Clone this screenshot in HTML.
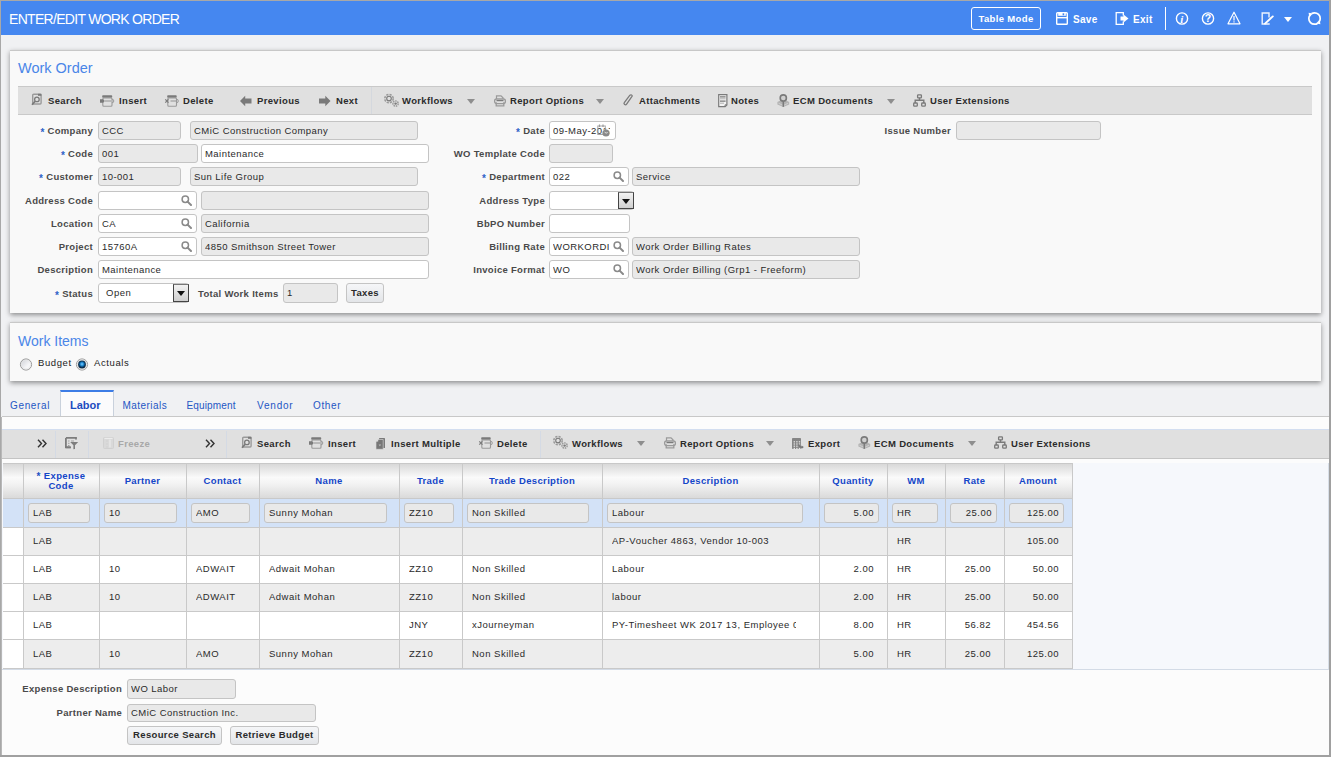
<!DOCTYPE html><html><head><meta charset="utf-8"><style>
html,body{margin:0;padding:0;} body{width:1331px;height:757px;overflow:hidden;position:relative;background:#f0f1f3;font-family:"Liberation Sans", sans-serif;}
*{box-sizing:content-box}
</style></head><body>
<div style="position:absolute;left:0px;top:0px;width:1331px;height:35px;background:#4587f0;"></div>
<div style="position:absolute;left:9px;top:2px;line-height:34px;font-size:14px;font-weight:normal;color:#fff;white-space:nowrap;letter-spacing:-0.7px;">ENTER/EDIT WORK ORDER</div>
<div style="position:absolute;left:971px;top:7px;width:70px;height:23px;box-sizing:border-box;border:1px solid #fff;border-radius:3px;color:#fff;font-size:9.5px;letter-spacing:0.35px;font-weight:bold;line-height:21px;text-align:center">Table Mode</div>
<svg style="position:absolute;left:1056px;top:12px" width="12" height="13" viewBox="0 0 12 13"><rect x="0.7" y="0.7" width="10.6" height="11.6" rx="0.8" fill="none" stroke="#fff" stroke-width="1.4"/><rect x="2.2" y="0.8" width="7.6" height="3" fill="#fff"/><rect x="6.6" y="1.3" width="1.6" height="2" fill="#4587f0"/><rect x="0.8" y="5" width="10.4" height="1.4" fill="#fff"/></svg>
<div style="position:absolute;left:1073px;top:3px;line-height:34px;font-size:10px;font-weight:bold;color:#fff;white-space:nowrap;letter-spacing:0.3px;">Save</div>
<svg style="position:absolute;left:1115px;top:12px" width="15" height="13" viewBox="0 0 15 13"><path d="M8.3 3.5V0.7H1.2v11.6h7.1V9.5" fill="none" stroke="#fff" stroke-width="1.3"/><path d="M5.5 4.5h3V2.5l5 4-5 4v-2h-3z" fill="#fff"/></svg>
<div style="position:absolute;left:1133px;top:3px;line-height:34px;font-size:10px;font-weight:bold;color:#fff;white-space:nowrap;letter-spacing:0.3px;">Exit</div>
<div style="position:absolute;left:1165px;top:7px;width:1px;height:23px;background:#fff;"></div>
<svg style="position:absolute;left:1175px;top:11px" width="14" height="14" viewBox="0 0 14 14"><circle cx="7" cy="7.5" r="5.6" fill="none" stroke="#fff" stroke-width="1.4"/><text x="6.8" y="11.6" font-family="Liberation Serif" font-style="italic" font-weight="bold" font-size="11" fill="#fff" text-anchor="middle">i</text></svg>
<svg style="position:absolute;left:1201px;top:11px" width="14" height="14" viewBox="0 0 14 14"><circle cx="7" cy="7.5" r="5.6" fill="none" stroke="#fff" stroke-width="1.4"/><text x="7" y="11.4" font-family="Liberation Sans" font-weight="bold" font-size="10.5" fill="#fff" text-anchor="middle">?</text></svg>
<svg style="position:absolute;left:1227px;top:11px" width="14" height="14" viewBox="0 0 14 14"><path d="M7 1.2L13 12.8H1z" fill="none" stroke="#fff" stroke-width="1.2" stroke-linejoin="round"/><rect x="6.4" y="5" width="1.2" height="4.5" fill="#fff"/><rect x="6.4" y="10.3" width="1.2" height="1.2" fill="#fff"/></svg>
<svg style="position:absolute;left:1260px;top:11px" width="15" height="15" viewBox="0 0 15 15"><path d="M9 6.5V2H2.2v11H9v-0.8" fill="none" stroke="#fff" stroke-width="1.4" opacity="0.9"/><path d="M5 12.6L12.8 5.4" stroke="#fff" stroke-width="1.9" stroke-linecap="round"/></svg>
<div style="position:absolute;left:1284px;top:17px;width:0;height:0;border-left:4px solid transparent;border-right:4px solid transparent;border-top:5px solid #fff"></div>
<svg style="position:absolute;left:1307px;top:11px" width="15" height="15" viewBox="0 0 15 15"><circle cx="7.5" cy="7.5" r="5.7" fill="none" stroke="#fff" stroke-width="1.7" stroke-dasharray="15.9 2" stroke-dashoffset="12.6"/><path d="M1.6 1.8L6 2.4 2.3 6.3z" fill="#fff"/><path d="M13.4 13.2L9 12.6 12.7 8.7z" fill="#fff"/></svg>
<div style="position:absolute;left:10px;top:50px;width:1311px;height:263px;background:#f9f9f9;border-top:1px solid #c8c8c8;box-sizing:border-box;box-shadow:0 2px 5px rgba(0,0,0,0.42);"></div>
<div style="position:absolute;left:18px;top:58px;line-height:20px;font-size:14.5px;font-weight:normal;color:#4a86e8;white-space:nowrap;">Work Order</div>
<div style="position:absolute;left:18px;top:86px;width:1294px;height:29px;background:#e0e0e0;border-top:1px solid #c9c9c9;border-bottom:1px solid #c9c9c9;box-sizing:border-box;"></div>
<svg style="position:absolute;left:31px;top:93px;overflow:visible" width="12" height="13" viewBox="0 0 12 13"><rect x="1.7" y="1.2" width="8.4" height="9.8" rx="1" fill="none" stroke="#9a9a9a" stroke-width="1.4"/><rect x="7" y="0.8" width="3.4" height="2" fill="#7a7a7a"/><circle cx="5.9" cy="6.4" r="2.3" fill="none" stroke="#7a7a7a" stroke-width="1.3"/><line x1="4.2" y1="8.2" x2="1" y2="11.8" stroke="#7a7a7a" stroke-width="1.7"/></svg>
<div style="position:absolute;left:48px;top:86px;line-height:29px;font-size:9.5px;font-weight:bold;color:#2b2b2b;white-space:nowrap;letter-spacing:0.35px;">Search</div>
<svg style="position:absolute;left:100px;top:95px;overflow:visible" width="14" height="12" viewBox="0 0 14 12"><rect x="2.2" y="0.2" width="10" height="2.6" rx="0.8" fill="#7a7a7a"/><rect x="2.8" y="3" width="9.2" height="8.2" rx="1" fill="none" stroke="#9a9a9a" stroke-width="1.1"/><line x1="5" y1="6" x2="11" y2="6" stroke="#9a9a9a" stroke-width="1.1"/><path d="M0 4.2h3.2l1.6 1.8-1.6 1.8H0z" fill="#7a7a7a"/><path d="M12 4.2a1.8 1.8 0 0 1 0 3.6" fill="none" stroke="#9a9a9a" stroke-width="1"/></svg>
<div style="position:absolute;left:119px;top:86px;line-height:29px;font-size:9.5px;font-weight:bold;color:#2b2b2b;white-space:nowrap;letter-spacing:0.35px;">Insert</div>
<svg style="position:absolute;left:165px;top:95px;overflow:visible" width="13" height="12" viewBox="0 0 13 12"><rect x="2.2" y="0.2" width="9.5" height="2.6" rx="0.8" fill="#7a7a7a"/><rect x="2.8" y="3" width="8.7" height="8.2" rx="1" fill="none" stroke="#9a9a9a" stroke-width="1.1"/><line x1="5.5" y1="6" x2="11" y2="6" stroke="#9a9a9a" stroke-width="1.1"/><path d="M0.3 4.3l3.2 3.4M3.5 4.3l-3.2 3.4" stroke="#7a7a7a" stroke-width="1.2"/><path d="M11.5 4.2a1.8 1.8 0 0 1 0 3.6" fill="none" stroke="#9a9a9a" stroke-width="1"/></svg>
<div style="position:absolute;left:183px;top:86px;line-height:29px;font-size:9.5px;font-weight:bold;color:#2b2b2b;white-space:nowrap;letter-spacing:0.35px;">Delete</div>
<svg style="position:absolute;left:240px;top:95px;overflow:visible" width="12" height="12" viewBox="0 0 12 12"><path d="M0 6L5.2 0.8V3.6H11.5V8.4H5.2V11.2z" fill="#7a7a7a"/></svg>
<div style="position:absolute;left:257px;top:86px;line-height:29px;font-size:9.5px;font-weight:bold;color:#2b2b2b;white-space:nowrap;letter-spacing:0.35px;">Previous</div>
<svg style="position:absolute;left:319px;top:95px;overflow:visible" width="12" height="12" viewBox="0 0 12 12"><path d="M11.5 6L6.3 0.8V3.6H0V8.4H6.3V11.2z" fill="#7a7a7a"/></svg>
<div style="position:absolute;left:336px;top:86px;line-height:29px;font-size:9.5px;font-weight:bold;color:#2b2b2b;white-space:nowrap;letter-spacing:0.35px;">Next</div>
<div style="position:absolute;left:371px;top:87px;width:1px;height:27px;background:#d4d8de;"></div>
<svg style="position:absolute;left:384px;top:93px;overflow:visible" width="15" height="14" viewBox="0 0 15 14"><circle cx="5" cy="5.6" r="4.2" fill="none" stroke="#9a9a9a" stroke-width="1.6" stroke-dasharray="2.2 1.1"/><circle cx="5" cy="5.6" r="2.3" fill="none" stroke="#7a7a7a" stroke-width="1.1"/><circle cx="11.6" cy="10.6" r="2.6" fill="none" stroke="#9a9a9a" stroke-width="1.5" stroke-dasharray="1.5 0.8"/><circle cx="11.6" cy="10.6" r="1.2" fill="#7a7a7a"/></svg>
<div style="position:absolute;left:402px;top:86px;line-height:29px;font-size:9.5px;font-weight:bold;color:#2b2b2b;white-space:nowrap;letter-spacing:0.35px;">Workflows</div>
<div style="position:absolute;left:467px;top:99px;width:0;height:0;border-left:4px solid transparent;border-right:4px solid transparent;border-top:5px solid #8e8e8e"></div>
<svg style="position:absolute;left:494px;top:95px;overflow:visible" width="12" height="12" viewBox="0 0 12 12"><path d="M2.5 4V0.8h4.5l2 2V4" fill="none" stroke="#9a9a9a" stroke-width="1.2"/><rect x="0.6" y="4" width="10.8" height="4.6" rx="2" fill="none" stroke="#9a9a9a" stroke-width="1.3"/><line x1="2.5" y1="5.6" x2="9.5" y2="5.6" stroke="#7a7a7a" stroke-width="1.2"/><path d="M2.2 7.2v3.6h7.6V7.2" fill="none" stroke="#9a9a9a" stroke-width="1.3"/></svg>
<div style="position:absolute;left:510px;top:86px;line-height:29px;font-size:9.5px;font-weight:bold;color:#2b2b2b;white-space:nowrap;letter-spacing:0.35px;">Report Options</div>
<div style="position:absolute;left:596px;top:99px;width:0;height:0;border-left:4px solid transparent;border-right:4px solid transparent;border-top:5px solid #8e8e8e"></div>
<svg style="position:absolute;left:623px;top:94px;overflow:visible" width="11" height="12" viewBox="0 0 11 12"><path d="M8.8 2.6L3.6 10.2a1.4 1.4 0 0 1-2.3-1.6L6.9 1.2a1.4 1.4 0 0 1 2.3 1.4" fill="none" stroke="#7a7a7a" stroke-width="1.3"/></svg>
<div style="position:absolute;left:639px;top:86px;line-height:29px;font-size:9.5px;font-weight:bold;color:#2b2b2b;white-space:nowrap;letter-spacing:0.35px;">Attachments</div>
<svg style="position:absolute;left:718px;top:94px;overflow:visible" width="10" height="13" viewBox="0 0 10 13"><path d="M0.7 0.7h8.2v10.2l-1.8 1.8H0.7z" fill="#f2f2f2" stroke="#7a7a7a" stroke-width="1.2"/><path d="M2 2.8h5.6M2 7.2h5.6" stroke="#7a7a7a" stroke-width="1.2"/><path d="M2 4.8h5.6M2 9.2h4" stroke="#a8a8a8" stroke-width="0.9"/><path d="M7 12.5V10.8h1.8" fill="none" stroke="#7a7a7a" stroke-width="0.9"/></svg>
<div style="position:absolute;left:731px;top:86px;line-height:29px;font-size:9.5px;font-weight:bold;color:#2b2b2b;white-space:nowrap;letter-spacing:0.35px;">Notes</div>
<svg style="position:absolute;left:777px;top:94px;overflow:visible" width="13" height="13" viewBox="0 0 13 13"><path d="M0.4 8L3.8 6.3 6.3 7.8 8.8 6.3 12.2 8V10.5L6.3 13 0.4 10.5z" fill="#b3b3b3"/><path d="M1.5 9.2L6.3 11.5 11.1 9.2" fill="none" stroke="#d8d8d8" stroke-width="0.7"/><circle cx="6.3" cy="4" r="3.1" fill="#d0d0d0" stroke="#7a7a7a" stroke-width="1.6"/><line x1="6.3" y1="7" x2="6.3" y2="12.8" stroke="#7a7a7a" stroke-width="1.5"/></svg>
<div style="position:absolute;left:793px;top:86px;line-height:29px;font-size:9.5px;font-weight:bold;color:#2b2b2b;white-space:nowrap;letter-spacing:0.35px;">ECM Documents</div>
<div style="position:absolute;left:887px;top:99px;width:0;height:0;border-left:4px solid transparent;border-right:4px solid transparent;border-top:5px solid #8e8e8e"></div>
<svg style="position:absolute;left:913px;top:94px;overflow:visible" width="13" height="13" viewBox="0 0 13 13"><rect x="4.6" y="0.8" width="3.8" height="3" rx="0.6" fill="none" stroke="#7a7a7a" stroke-width="1.3"/><path d="M6.5 3.8V6.2M2.2 9V6.2h8.6V9" fill="none" stroke="#7a7a7a" stroke-width="1.4"/><rect x="0.7" y="9" width="3.6" height="3.2" rx="0.8" fill="none" stroke="#7a7a7a" stroke-width="1.3"/><rect x="8.7" y="9" width="3.6" height="3.2" rx="0.8" fill="none" stroke="#7a7a7a" stroke-width="1.3"/></svg>
<div style="position:absolute;left:930px;top:86px;line-height:29px;font-size:9.5px;font-weight:bold;color:#2b2b2b;white-space:nowrap;letter-spacing:0.35px;">User Extensions</div>
<div style="position:absolute;left:-207px;top:121px;width:300px;line-height:19px;text-align:right;font-size:9.5px;font-weight:bold;color:#4a4a4a;white-space:nowrap;letter-spacing:0.3px;"><span style="color:#2f63c8;font-size:10px;position:relative;top:1.5px">*</span> Company</div>
<div style="position:absolute;left:-207px;top:144px;width:300px;line-height:19px;text-align:right;font-size:9.5px;font-weight:bold;color:#4a4a4a;white-space:nowrap;letter-spacing:0.3px;"><span style="color:#2f63c8;font-size:10px;position:relative;top:1.5px">*</span> Code</div>
<div style="position:absolute;left:-207px;top:167px;width:300px;line-height:19px;text-align:right;font-size:9.5px;font-weight:bold;color:#4a4a4a;white-space:nowrap;letter-spacing:0.3px;"><span style="color:#2f63c8;font-size:10px;position:relative;top:1.5px">*</span> Customer</div>
<div style="position:absolute;left:-207px;top:191px;width:300px;line-height:19px;text-align:right;font-size:9.5px;font-weight:bold;color:#4a4a4a;white-space:nowrap;letter-spacing:0.3px;">Address Code</div>
<div style="position:absolute;left:-207px;top:214px;width:300px;line-height:19px;text-align:right;font-size:9.5px;font-weight:bold;color:#4a4a4a;white-space:nowrap;letter-spacing:0.3px;">Location</div>
<div style="position:absolute;left:-207px;top:237px;width:300px;line-height:19px;text-align:right;font-size:9.5px;font-weight:bold;color:#4a4a4a;white-space:nowrap;letter-spacing:0.3px;">Project</div>
<div style="position:absolute;left:-207px;top:260px;width:300px;line-height:19px;text-align:right;font-size:9.5px;font-weight:bold;color:#4a4a4a;white-space:nowrap;letter-spacing:0.3px;">Description</div>
<div style="position:absolute;left:-207px;top:284px;width:300px;line-height:19px;text-align:right;font-size:9.5px;font-weight:bold;color:#4a4a4a;white-space:nowrap;letter-spacing:0.3px;"><span style="color:#2f63c8;font-size:10px;position:relative;top:1.5px">*</span> Status</div>
<div style="position:absolute;left:98px;top:121px;width:83px;height:19px;box-sizing:border-box;border:1px solid #c4c4c4;border-radius:3px;background:#e9e9e9;"><div style="position:absolute;left:3px;top:0;line-height:17px;font-size:9.5px;color:#2a2a2a;white-space:nowrap;overflow:hidden;letter-spacing:0.45px;width:73px">CCC</div></div>
<div style="position:absolute;left:190px;top:121px;width:228px;height:19px;box-sizing:border-box;border:1px solid #c4c4c4;border-radius:3px;background:#e9e9e9;"><div style="position:absolute;left:3px;top:0;line-height:17px;font-size:9.5px;color:#2a2a2a;white-space:nowrap;overflow:hidden;letter-spacing:0.45px;width:218px">CMiC Construction Company</div></div>
<div style="position:absolute;left:98px;top:144px;width:100px;height:19px;box-sizing:border-box;border:1px solid #c4c4c4;border-radius:3px;background:#e9e9e9;"><div style="position:absolute;left:3px;top:0;line-height:17px;font-size:9.5px;color:#2a2a2a;white-space:nowrap;overflow:hidden;letter-spacing:0.45px;width:90px">001</div></div>
<div style="position:absolute;left:201px;top:144px;width:228px;height:19px;box-sizing:border-box;border:1px solid #c4c4c4;border-radius:3px;background:#fff;"><div style="position:absolute;left:3px;top:0;line-height:17px;font-size:9.5px;color:#2a2a2a;white-space:nowrap;overflow:hidden;letter-spacing:0.45px;width:218px">Maintenance</div></div>
<div style="position:absolute;left:98px;top:167px;width:83px;height:19px;box-sizing:border-box;border:1px solid #c4c4c4;border-radius:3px;background:#e9e9e9;"><div style="position:absolute;left:3px;top:0;line-height:17px;font-size:9.5px;color:#2a2a2a;white-space:nowrap;overflow:hidden;letter-spacing:0.45px;width:73px">10-001</div></div>
<div style="position:absolute;left:190px;top:167px;width:228px;height:19px;box-sizing:border-box;border:1px solid #c4c4c4;border-radius:3px;background:#e9e9e9;"><div style="position:absolute;left:3px;top:0;line-height:17px;font-size:9.5px;color:#2a2a2a;white-space:nowrap;overflow:hidden;letter-spacing:0.45px;width:218px">Sun Life Group</div></div>
<div style="position:absolute;left:98px;top:191px;width:99px;height:19px;box-sizing:border-box;border:1px solid #c4c4c4;border-radius:3px;background:#fff;"><svg style="position:absolute;right:4px;top:3px" width="11" height="11" viewBox="0 0 11 11"><circle cx="4.3" cy="4.3" r="3.2" fill="none" stroke="#8a8a8a" stroke-width="1.5"/><line x1="6.6" y1="6.6" x2="10" y2="10" stroke="#8a8a8a" stroke-width="2" stroke-linecap="round"/></svg></div>
<div style="position:absolute;left:201px;top:191px;width:228px;height:19px;box-sizing:border-box;border:1px solid #c4c4c4;border-radius:3px;background:#e9e9e9;"></div>
<div style="position:absolute;left:98px;top:214px;width:99px;height:19px;box-sizing:border-box;border:1px solid #c4c4c4;border-radius:3px;background:#fff;"><div style="position:absolute;left:3px;top:0;line-height:17px;font-size:9.5px;color:#2a2a2a;white-space:nowrap;overflow:hidden;letter-spacing:0.45px;width:75px">CA</div><svg style="position:absolute;right:4px;top:3px" width="11" height="11" viewBox="0 0 11 11"><circle cx="4.3" cy="4.3" r="3.2" fill="none" stroke="#8a8a8a" stroke-width="1.5"/><line x1="6.6" y1="6.6" x2="10" y2="10" stroke="#8a8a8a" stroke-width="2" stroke-linecap="round"/></svg></div>
<div style="position:absolute;left:201px;top:214px;width:228px;height:19px;box-sizing:border-box;border:1px solid #c4c4c4;border-radius:3px;background:#e9e9e9;"><div style="position:absolute;left:3px;top:0;line-height:17px;font-size:9.5px;color:#2a2a2a;white-space:nowrap;overflow:hidden;letter-spacing:0.45px;width:218px">California</div></div>
<div style="position:absolute;left:98px;top:237px;width:99px;height:19px;box-sizing:border-box;border:1px solid #c4c4c4;border-radius:3px;background:#fff;"><div style="position:absolute;left:3px;top:0;line-height:17px;font-size:9.5px;color:#2a2a2a;white-space:nowrap;overflow:hidden;letter-spacing:0.45px;width:75px">15760A</div><svg style="position:absolute;right:4px;top:3px" width="11" height="11" viewBox="0 0 11 11"><circle cx="4.3" cy="4.3" r="3.2" fill="none" stroke="#8a8a8a" stroke-width="1.5"/><line x1="6.6" y1="6.6" x2="10" y2="10" stroke="#8a8a8a" stroke-width="2" stroke-linecap="round"/></svg></div>
<div style="position:absolute;left:201px;top:237px;width:228px;height:19px;box-sizing:border-box;border:1px solid #c4c4c4;border-radius:3px;background:#e9e9e9;"><div style="position:absolute;left:3px;top:0;line-height:17px;font-size:9.5px;color:#2a2a2a;white-space:nowrap;overflow:hidden;letter-spacing:0.45px;width:218px">4850 Smithson Street Tower</div></div>
<div style="position:absolute;left:98px;top:260px;width:331px;height:19px;box-sizing:border-box;border:1px solid #c4c4c4;border-radius:3px;background:#fff;"><div style="position:absolute;left:3px;top:0;line-height:17px;font-size:9.5px;color:#2a2a2a;white-space:nowrap;overflow:hidden;letter-spacing:0.45px;width:321px">Maintenance</div></div>
<div style="position:absolute;left:98px;top:283px;width:91px;height:20px;box-sizing:border-box;border:1px solid #c4c4c4;border-radius:3px;background:#fff;"><div style="position:absolute;left:7px;top:0;line-height:17px;font-size:9.5px;letter-spacing:0.5px;color:#2a2a2a">Open</div><div style="position:absolute;right:-1px;top:0px;width:16px;height:18px;box-sizing:border-box;border:1px solid #444;border-top-color:#777;background:linear-gradient(#f2f2f2,#cfcfcf);"><div style="position:absolute;left:3px;top:6px;width:0;height:0;border-left:4px solid transparent;border-right:4px solid transparent;border-top:5px solid #111"></div></div></div>
<div style="position:absolute;left:198px;top:284px;line-height:19px;font-size:9.5px;font-weight:bold;color:#4a4a4a;white-space:nowrap;letter-spacing:0.3px;">Total Work Items</div>
<div style="position:absolute;left:283px;top:283px;width:55px;height:20px;box-sizing:border-box;border:1px solid #c4c4c4;border-radius:3px;background:#e9e9e9;"><div style="position:absolute;left:3px;top:0;line-height:18px;font-size:9.5px;color:#2a2a2a;white-space:nowrap;overflow:hidden;letter-spacing:0.45px;width:45px">1</div></div>
<div style="position:absolute;left:346px;top:283px;width:38px;height:20px;box-sizing:border-box;border:1px solid #c4c4c4;border-radius:3px;background:linear-gradient(#f5f6f8,#e3e5e8);line-height:17px;text-align:center;font-size:9.5px;letter-spacing:0.35px;font-weight:bold;color:#2a2a2a;white-space:nowrap">Taxes</div>
<div style="position:absolute;left:245px;top:121px;width:300px;line-height:19px;text-align:right;font-size:9.5px;font-weight:bold;color:#4a4a4a;white-space:nowrap;letter-spacing:0.3px;"><span style="color:#2f63c8;font-size:10px;position:relative;top:1.5px">*</span> Date</div>
<div style="position:absolute;left:245px;top:144px;width:300px;line-height:19px;text-align:right;font-size:9.5px;font-weight:bold;color:#4a4a4a;white-space:nowrap;letter-spacing:0.3px;">WO Template Code</div>
<div style="position:absolute;left:245px;top:167px;width:300px;line-height:19px;text-align:right;font-size:9.5px;font-weight:bold;color:#4a4a4a;white-space:nowrap;letter-spacing:0.3px;"><span style="color:#2f63c8;font-size:10px;position:relative;top:1.5px">*</span> Department</div>
<div style="position:absolute;left:245px;top:191px;width:300px;line-height:19px;text-align:right;font-size:9.5px;font-weight:bold;color:#4a4a4a;white-space:nowrap;letter-spacing:0.3px;">Address Type</div>
<div style="position:absolute;left:245px;top:214px;width:300px;line-height:19px;text-align:right;font-size:9.5px;font-weight:bold;color:#4a4a4a;white-space:nowrap;letter-spacing:0.3px;">BbPO Number</div>
<div style="position:absolute;left:245px;top:237px;width:300px;line-height:19px;text-align:right;font-size:9.5px;font-weight:bold;color:#4a4a4a;white-space:nowrap;letter-spacing:0.3px;">Billing Rate</div>
<div style="position:absolute;left:245px;top:260px;width:300px;line-height:19px;text-align:right;font-size:9.5px;font-weight:bold;color:#4a4a4a;white-space:nowrap;letter-spacing:0.3px;">Invoice Format</div>
<div style="position:absolute;left:549px;top:121px;width:67px;height:19px;box-sizing:border-box;border:1px solid #c4c4c4;border-radius:3px;background:#fff;"><div style="position:absolute;left:3px;top:0;line-height:17px;font-size:9.5px;color:#2a2a2a;white-space:nowrap;overflow:hidden;letter-spacing:0.45px;width:57px">09-May-2017</div></div>
<svg style="position:absolute;left:597px;top:124px;overflow:visible" width="14" height="14" viewBox="0 0 14 14"><rect x="0.8" y="2" width="7.5" height="8.5" fill="none" stroke="#a8a8a8" stroke-width="1"/><path d="M2.5 0.5v2.5M6 0.5v2.5" stroke="#999" stroke-width="1.2"/><circle cx="9" cy="9" r="3.6" fill="#8a8a8a"/><path d="M7.6 8.2l1.6 0.9 1.5-0.6" stroke="#e8e8e8" stroke-width="0.9" fill="none"/></svg>
<div style="position:absolute;left:549px;top:144px;width:64px;height:19px;box-sizing:border-box;border:1px solid #c4c4c4;border-radius:3px;background:#e9e9e9;"></div>
<div style="position:absolute;left:549px;top:167px;width:80px;height:19px;box-sizing:border-box;border:1px solid #c4c4c4;border-radius:3px;background:#fff;"><div style="position:absolute;left:3px;top:0;line-height:17px;font-size:9.5px;color:#2a2a2a;white-space:nowrap;overflow:hidden;letter-spacing:0.45px;width:56px">022</div><svg style="position:absolute;right:4px;top:3px" width="11" height="11" viewBox="0 0 11 11"><circle cx="4.3" cy="4.3" r="3.2" fill="none" stroke="#8a8a8a" stroke-width="1.5"/><line x1="6.6" y1="6.6" x2="10" y2="10" stroke="#8a8a8a" stroke-width="2" stroke-linecap="round"/></svg></div>
<div style="position:absolute;left:632px;top:167px;width:228px;height:19px;box-sizing:border-box;border:1px solid #c4c4c4;border-radius:3px;background:#e9e9e9;"><div style="position:absolute;left:3px;top:0;line-height:17px;font-size:9.5px;color:#2a2a2a;white-space:nowrap;overflow:hidden;letter-spacing:0.45px;width:218px">Service</div></div>
<div style="position:absolute;left:549px;top:191px;width:85px;height:19px;box-sizing:border-box;border:1px solid #c4c4c4;border-radius:3px;background:#fff;"><div style="position:absolute;right:-1px;top:0px;width:16px;height:17px;box-sizing:border-box;border:1px solid #444;border-top-color:#777;background:linear-gradient(#f2f2f2,#cfcfcf);"><div style="position:absolute;left:3px;top:6px;width:0;height:0;border-left:4px solid transparent;border-right:4px solid transparent;border-top:5px solid #111"></div></div></div>
<div style="position:absolute;left:549px;top:214px;width:81px;height:19px;box-sizing:border-box;border:1px solid #c4c4c4;border-radius:3px;background:#fff;"></div>
<div style="position:absolute;left:549px;top:237px;width:80px;height:19px;box-sizing:border-box;border:1px solid #c4c4c4;border-radius:3px;background:#fff;"><div style="position:absolute;left:3px;top:0;line-height:17px;font-size:9.5px;color:#2a2a2a;white-space:nowrap;overflow:hidden;letter-spacing:0.45px;width:56px">WORKORDI</div><svg style="position:absolute;right:4px;top:3px" width="11" height="11" viewBox="0 0 11 11"><circle cx="4.3" cy="4.3" r="3.2" fill="none" stroke="#8a8a8a" stroke-width="1.5"/><line x1="6.6" y1="6.6" x2="10" y2="10" stroke="#8a8a8a" stroke-width="2" stroke-linecap="round"/></svg></div>
<div style="position:absolute;left:632px;top:237px;width:228px;height:19px;box-sizing:border-box;border:1px solid #c4c4c4;border-radius:3px;background:#e9e9e9;"><div style="position:absolute;left:3px;top:0;line-height:17px;font-size:9.5px;color:#2a2a2a;white-space:nowrap;overflow:hidden;letter-spacing:0.45px;width:218px">Work Order Billing Rates</div></div>
<div style="position:absolute;left:549px;top:260px;width:80px;height:19px;box-sizing:border-box;border:1px solid #c4c4c4;border-radius:3px;background:#fff;"><div style="position:absolute;left:3px;top:0;line-height:17px;font-size:9.5px;color:#2a2a2a;white-space:nowrap;overflow:hidden;letter-spacing:0.45px;width:56px">WO</div><svg style="position:absolute;right:4px;top:3px" width="11" height="11" viewBox="0 0 11 11"><circle cx="4.3" cy="4.3" r="3.2" fill="none" stroke="#8a8a8a" stroke-width="1.5"/><line x1="6.6" y1="6.6" x2="10" y2="10" stroke="#8a8a8a" stroke-width="2" stroke-linecap="round"/></svg></div>
<div style="position:absolute;left:632px;top:260px;width:228px;height:19px;box-sizing:border-box;border:1px solid #c4c4c4;border-radius:3px;background:#e9e9e9;"><div style="position:absolute;left:3px;top:0;line-height:17px;font-size:9.5px;color:#2a2a2a;white-space:nowrap;overflow:hidden;letter-spacing:0.45px;width:218px">Work Order Billing (Grp1 - Freeform)</div></div>
<div style="position:absolute;left:651px;top:121px;width:300px;line-height:19px;text-align:right;font-size:9.5px;font-weight:bold;color:#4a4a4a;white-space:nowrap;letter-spacing:0.3px;">Issue Number</div>
<div style="position:absolute;left:956px;top:121px;width:145px;height:19px;box-sizing:border-box;border:1px solid #c4c4c4;border-radius:3px;background:#e9e9e9;"></div>
<div style="position:absolute;left:10px;top:322px;width:1311px;height:59px;background:#f9f9f9;border-top:1px solid #c8c8c8;box-sizing:border-box;box-shadow:0 2px 5px rgba(0,0,0,0.42);"></div>
<div style="position:absolute;left:18px;top:331px;line-height:20px;font-size:14px;font-weight:normal;color:#4a86e8;white-space:nowrap;">Work Items</div>
<svg style="position:absolute;left:20px;top:358px;overflow:visible" width="13" height="13" viewBox="0 0 13 13"><defs><linearGradient id="rg" x1="0" y1="0" x2="1" y2="1"><stop offset="0" stop-color="#c9ccd2"/><stop offset="0.6" stop-color="#f4f4f6"/><stop offset="1" stop-color="#ffffff"/></linearGradient><radialGradient id="rb" cx="0.5" cy="0.45" r="0.5"><stop offset="0" stop-color="#7fd0ff"/><stop offset="0.45" stop-color="#1c86d0"/><stop offset="0.75" stop-color="#0a3d66"/><stop offset="1" stop-color="#06223c"/></radialGradient></defs><circle cx="6" cy="6.5" r="5.6" fill="url(#rg)" stroke="#9a9a9a" stroke-width="1"/><circle cx="6" cy="6.5" r="4.5" fill="none" stroke="#e6e6e6" stroke-width="0.8"/></svg>
<div style="position:absolute;left:38px;top:354px;line-height:18px;font-size:9.5px;font-weight:normal;color:#222;white-space:nowrap;letter-spacing:0.6px;">Budget</div>
<svg style="position:absolute;left:76px;top:358px;overflow:visible" width="13" height="13" viewBox="0 0 13 13"><circle cx="6" cy="6.5" r="5.6" fill="#fff" stroke="#9a9a9a" stroke-width="1"/><circle cx="6" cy="6.5" r="4.7" fill="none" stroke="#d6d6d6" stroke-width="0.8"/><circle cx="6" cy="6.5" r="3.9" fill="url(#rb)"/></svg>
<div style="position:absolute;left:94px;top:354px;line-height:18px;font-size:9.5px;font-weight:normal;color:#222;white-space:nowrap;letter-spacing:0.6px;">Actuals</div>
<div style="position:absolute;left:60px;top:390px;width:54px;height:26px;background:#fbfbfc;border-top:2px solid #3d7de6;border-left:1px solid #c9d1dc;border-right:1px solid #c9d1dc;box-sizing:border-box;"></div>
<div style="position:absolute;left:2px;top:416px;width:1327px;height:1px;background:#c8c8c8;"></div>
<div style="position:absolute;left:10px;top:397px;line-height:18px;font-size:10px;font-weight:normal;color:#2456c4;white-space:nowrap;letter-spacing:0.65px;">General</div>
<div style="position:absolute;left:122.5px;top:397px;line-height:18px;font-size:10px;font-weight:normal;color:#2456c4;white-space:nowrap;letter-spacing:0.45px;">Materials</div>
<div style="position:absolute;left:186.5px;top:397px;line-height:18px;font-size:10px;font-weight:normal;color:#2456c4;white-space:nowrap;letter-spacing:0.15px;">Equipment</div>
<div style="position:absolute;left:257px;top:397px;line-height:18px;font-size:10px;font-weight:normal;color:#2456c4;white-space:nowrap;letter-spacing:0.8px;">Vendor</div>
<div style="position:absolute;left:313px;top:397px;line-height:18px;font-size:10px;font-weight:normal;color:#2456c4;white-space:nowrap;letter-spacing:0.65px;">Other</div>
<div style="position:absolute;left:70px;top:396px;line-height:18px;font-size:11px;font-weight:bold;color:#1c4cc0;white-space:nowrap;">Labor</div>
<div style="position:absolute;left:2px;top:417px;width:1327px;height:340px;background:#fcfcfc;"></div>
<div style="position:absolute;left:2px;top:429px;width:1327px;height:1px;background:#d3def0;"></div>
<div style="position:absolute;left:2px;top:430px;width:1327px;height:29px;background:#e0e0e0;border-bottom:1px solid #c4c4c4;box-sizing:border-box;"></div>
<svg style="position:absolute;left:37px;top:439px" width="10" height="9" viewBox="0 0 10 9"><path d="M1 0.8l3.5 3.7L1 8.2M5.5 0.8L9 4.5 5.5 8.2" fill="none" stroke="#333" stroke-width="1.4"/></svg>
<div style="position:absolute;left:55px;top:431px;width:1px;height:27px;background:#d4dae4;"></div>
<svg style="position:absolute;left:65px;top:437px;overflow:visible" width="14" height="13" viewBox="0 0 14 13"><path d="M0.9 0.9H11V2.6M0.9 0.9V10.3H6" fill="none" stroke="#7d7d7d" stroke-width="1.8"/><path d="M0.9 10.3H5.5" stroke="#7d7d7d" stroke-width="1.8"/><path d="M3 4h1.5M6 4h3M3 6.3h1.5M3 8.5h1.5" stroke="#9a9a9a" stroke-width="0.9"/><path d="M5.2 5H13.2L10 8.3V12L8.4 12.2V8.3z" fill="#7d7d7d"/></svg>
<div style="position:absolute;left:88px;top:431px;width:1px;height:27px;background:#d4dae4;"></div>
<svg style="position:absolute;left:103px;top:437px;overflow:visible" width="11" height="12" viewBox="0 0 11 12"><rect x="0.5" y="0.5" width="10" height="11" rx="1" fill="#d9d9d9" stroke="#d0d0d0"/><path d="M1.5 1.3h8" stroke="#f4f4f4" stroke-width="0.9"/><path d="M7 2.5v8" stroke="#f0f0f0" stroke-width="0.9"/><path d="M3 4h2M3 7h2M3 10h2" stroke="#cfcfcf" stroke-width="0.8"/></svg>
<div style="position:absolute;left:118px;top:429px;line-height:29px;font-size:9.5px;font-weight:bold;color:#a8a8a8;white-space:nowrap;letter-spacing:0.35px;">Freeze</div>
<svg style="position:absolute;left:205px;top:439px" width="10" height="9" viewBox="0 0 10 9"><path d="M1 0.8l3.5 3.7L1 8.2M5.5 0.8L9 4.5 5.5 8.2" fill="none" stroke="#333" stroke-width="1.4"/></svg>
<div style="position:absolute;left:226px;top:431px;width:1px;height:27px;background:#d4dae4;"></div>
<svg style="position:absolute;left:241px;top:436px;overflow:visible" width="12" height="13" viewBox="0 0 12 13"><rect x="1.7" y="1.2" width="8.4" height="9.8" rx="1" fill="none" stroke="#9a9a9a" stroke-width="1.4"/><rect x="7" y="0.8" width="3.4" height="2" fill="#7a7a7a"/><circle cx="5.9" cy="6.4" r="2.3" fill="none" stroke="#7a7a7a" stroke-width="1.3"/><line x1="4.2" y1="8.2" x2="1" y2="11.8" stroke="#7a7a7a" stroke-width="1.7"/></svg>
<div style="position:absolute;left:257px;top:429px;line-height:29px;font-size:9.5px;font-weight:bold;color:#2b2b2b;white-space:nowrap;letter-spacing:0.35px;">Search</div>
<svg style="position:absolute;left:309px;top:437px;overflow:visible" width="14" height="12" viewBox="0 0 14 12"><rect x="2.2" y="0.2" width="10" height="2.6" rx="0.8" fill="#7a7a7a"/><rect x="2.8" y="3" width="9.2" height="8.2" rx="1" fill="none" stroke="#9a9a9a" stroke-width="1.1"/><line x1="5" y1="6" x2="11" y2="6" stroke="#9a9a9a" stroke-width="1.1"/><path d="M0 4.2h3.2l1.6 1.8-1.6 1.8H0z" fill="#7a7a7a"/><path d="M12 4.2a1.8 1.8 0 0 1 0 3.6" fill="none" stroke="#9a9a9a" stroke-width="1"/></svg>
<div style="position:absolute;left:328px;top:429px;line-height:29px;font-size:9.5px;font-weight:bold;color:#2b2b2b;white-space:nowrap;letter-spacing:0.35px;">Insert</div>
<svg style="position:absolute;left:376px;top:438px;overflow:visible" width="10" height="13" viewBox="0 0 10 13"><rect x="3" y="0" width="6" height="10" rx="0.6" fill="#7a7a7a"/><path d="M2.2 1.5H7.2V11.3H0V3.8z" fill="#777" stroke="#dcdcdc" stroke-width="0.6"/><path d="M0.2 3.6L2.2 1.6V3.6z" fill="#e8e8e8"/><path d="M2.6 6.5h2.6L3.9 8.3z" fill="#bdbdbd"/></svg>
<div style="position:absolute;left:391px;top:429px;line-height:29px;font-size:9.5px;font-weight:bold;color:#2b2b2b;white-space:nowrap;letter-spacing:0.35px;">Insert Multiple</div>
<svg style="position:absolute;left:479px;top:437px;overflow:visible" width="13" height="12" viewBox="0 0 13 12"><rect x="2.2" y="0.2" width="9.5" height="2.6" rx="0.8" fill="#7a7a7a"/><rect x="2.8" y="3" width="8.7" height="8.2" rx="1" fill="none" stroke="#9a9a9a" stroke-width="1.1"/><line x1="5.5" y1="6" x2="11" y2="6" stroke="#9a9a9a" stroke-width="1.1"/><path d="M0.3 4.3l3.2 3.4M3.5 4.3l-3.2 3.4" stroke="#7a7a7a" stroke-width="1.2"/><path d="M11.5 4.2a1.8 1.8 0 0 1 0 3.6" fill="none" stroke="#9a9a9a" stroke-width="1"/></svg>
<div style="position:absolute;left:497px;top:429px;line-height:29px;font-size:9.5px;font-weight:bold;color:#2b2b2b;white-space:nowrap;letter-spacing:0.35px;">Delete</div>
<div style="position:absolute;left:540px;top:431px;width:1px;height:27px;background:#d4dae4;"></div>
<svg style="position:absolute;left:553px;top:435px;overflow:visible" width="15" height="14" viewBox="0 0 15 14"><circle cx="5" cy="5.6" r="4.2" fill="none" stroke="#9a9a9a" stroke-width="1.6" stroke-dasharray="2.2 1.1"/><circle cx="5" cy="5.6" r="2.3" fill="none" stroke="#7a7a7a" stroke-width="1.1"/><circle cx="11.6" cy="10.6" r="2.6" fill="none" stroke="#9a9a9a" stroke-width="1.5" stroke-dasharray="1.5 0.8"/><circle cx="11.6" cy="10.6" r="1.2" fill="#7a7a7a"/></svg>
<div style="position:absolute;left:572px;top:429px;line-height:29px;font-size:9.5px;font-weight:bold;color:#2b2b2b;white-space:nowrap;letter-spacing:0.35px;">Workflows</div>
<div style="position:absolute;left:637px;top:441px;width:0;height:0;border-left:4px solid transparent;border-right:4px solid transparent;border-top:5px solid #8e8e8e"></div>
<svg style="position:absolute;left:664px;top:437px;overflow:visible" width="12" height="12" viewBox="0 0 12 12"><path d="M2.5 4V0.8h4.5l2 2V4" fill="none" stroke="#9a9a9a" stroke-width="1.2"/><rect x="0.6" y="4" width="10.8" height="4.6" rx="2" fill="none" stroke="#9a9a9a" stroke-width="1.3"/><line x1="2.5" y1="5.6" x2="9.5" y2="5.6" stroke="#7a7a7a" stroke-width="1.2"/><path d="M2.2 7.2v3.6h7.6V7.2" fill="none" stroke="#9a9a9a" stroke-width="1.3"/></svg>
<div style="position:absolute;left:680px;top:429px;line-height:29px;font-size:9.5px;font-weight:bold;color:#2b2b2b;white-space:nowrap;letter-spacing:0.35px;">Report Options</div>
<div style="position:absolute;left:766px;top:441px;width:0;height:0;border-left:4px solid transparent;border-right:4px solid transparent;border-top:5px solid #8e8e8e"></div>
<svg style="position:absolute;left:792px;top:438px;overflow:visible" width="12" height="12" viewBox="0 0 12 12"><rect x="0" y="0" width="9" height="11" rx="0.8" fill="#858585"/><rect x="1.6" y="3.2" width="1.4" height="1.2" fill="#e6e6e6"/><rect x="4.2" y="3.2" width="1.4" height="1.2" fill="#e6e6e6"/><rect x="6.8" y="3.2" width="1.4" height="1.2" fill="#e6e6e6"/><rect x="1.6" y="5.4" width="1.4" height="1.2" fill="#e6e6e6"/><rect x="4.2" y="5.4" width="1.4" height="1.2" fill="#e6e6e6"/><rect x="6.8" y="5.4" width="1.4" height="1.2" fill="#e6e6e6"/><rect x="1.6" y="7.6" width="1.4" height="1.2" fill="#e6e6e6"/><rect x="4.2" y="7.6" width="1.4" height="1.2" fill="#e6e6e6"/><rect x="6.8" y="7.6" width="1.4" height="1.2" fill="#e6e6e6"/><rect x="1.6" y="9.8" width="1.4" height="1.2" fill="#e6e6e6"/><rect x="4.2" y="9.8" width="1.4" height="1.2" fill="#e6e6e6"/><rect x="6.8" y="9.8" width="1.4" height="1.2" fill="#e6e6e6"/><path d="M6.5 6.5Q7.5 9.5 10.5 9.2" fill="none" stroke="#777" stroke-width="1.3"/><path d="M9.5 7.4L11.8 9.1 9.6 10.9z" fill="#777"/></svg>
<div style="position:absolute;left:808px;top:429px;line-height:29px;font-size:9.5px;font-weight:bold;color:#2b2b2b;white-space:nowrap;letter-spacing:0.35px;">Export</div>
<svg style="position:absolute;left:858px;top:436px;overflow:visible" width="13" height="13" viewBox="0 0 13 13"><path d="M0.4 8L3.8 6.3 6.3 7.8 8.8 6.3 12.2 8V10.5L6.3 13 0.4 10.5z" fill="#b3b3b3"/><path d="M1.5 9.2L6.3 11.5 11.1 9.2" fill="none" stroke="#d8d8d8" stroke-width="0.7"/><circle cx="6.3" cy="4" r="3.1" fill="#d0d0d0" stroke="#7a7a7a" stroke-width="1.6"/><line x1="6.3" y1="7" x2="6.3" y2="12.8" stroke="#7a7a7a" stroke-width="1.5"/></svg>
<div style="position:absolute;left:874px;top:429px;line-height:29px;font-size:9.5px;font-weight:bold;color:#2b2b2b;white-space:nowrap;letter-spacing:0.35px;">ECM Documents</div>
<div style="position:absolute;left:968px;top:441px;width:0;height:0;border-left:4px solid transparent;border-right:4px solid transparent;border-top:5px solid #8e8e8e"></div>
<svg style="position:absolute;left:994px;top:436px;overflow:visible" width="13" height="13" viewBox="0 0 13 13"><rect x="4.6" y="0.8" width="3.8" height="3" rx="0.6" fill="none" stroke="#7a7a7a" stroke-width="1.3"/><path d="M6.5 3.8V6.2M2.2 9V6.2h8.6V9" fill="none" stroke="#7a7a7a" stroke-width="1.4"/><rect x="0.7" y="9" width="3.6" height="3.2" rx="0.8" fill="none" stroke="#7a7a7a" stroke-width="1.3"/><rect x="8.7" y="9" width="3.6" height="3.2" rx="0.8" fill="none" stroke="#7a7a7a" stroke-width="1.3"/></svg>
<div style="position:absolute;left:1011px;top:429px;line-height:29px;font-size:9.5px;font-weight:bold;color:#2b2b2b;white-space:nowrap;letter-spacing:0.35px;">User Extensions</div>
<div style="position:absolute;left:2px;top:463px;width:1327px;height:207px;background:#f6f8fc;border-right:1px solid #d8dfe8;border-bottom:1px solid #d3dbe6;box-sizing:border-box;"></div>
<div style="position:absolute;left:3px;top:463px;width:1070px;height:36px;background:linear-gradient(#d8d8d8 0%,#fafafa 40%,#f2f2f2 60%,#dadada 100%);border-top:1px solid #c8c8c8;border-bottom:1px solid #c9c9c9;box-sizing:border-box;"></div>
<div style="position:absolute;left:23px;top:463px;width:76px;height:35px;display:flex;align-items:center;justify-content:center;text-align:center;font-size:9.5px;letter-spacing:0.35px;font-weight:bold;color:#1446c8;line-height:10px"><div><span style="color:#1d52c4;font-size:10px;position:relative;top:1.5px">*</span> Expense<br>Code</div></div>
<div style="position:absolute;left:99px;top:463px;width:87px;height:35px;display:flex;align-items:center;justify-content:center;text-align:center;font-size:9.5px;letter-spacing:0.35px;font-weight:bold;color:#1446c8;line-height:10px">Partner</div>
<div style="position:absolute;left:186px;top:463px;width:73px;height:35px;display:flex;align-items:center;justify-content:center;text-align:center;font-size:9.5px;letter-spacing:0.35px;font-weight:bold;color:#1446c8;line-height:10px">Contact</div>
<div style="position:absolute;left:259px;top:463px;width:140px;height:35px;display:flex;align-items:center;justify-content:center;text-align:center;font-size:9.5px;letter-spacing:0.35px;font-weight:bold;color:#1446c8;line-height:10px">Name</div>
<div style="position:absolute;left:399px;top:463px;width:63px;height:35px;display:flex;align-items:center;justify-content:center;text-align:center;font-size:9.5px;letter-spacing:0.35px;font-weight:bold;color:#1446c8;line-height:10px">Trade</div>
<div style="position:absolute;left:462px;top:463px;width:140px;height:35px;display:flex;align-items:center;justify-content:center;text-align:center;font-size:9.5px;letter-spacing:0.35px;font-weight:bold;color:#1446c8;line-height:10px">Trade Description</div>
<div style="position:absolute;left:602px;top:463px;width:217px;height:35px;display:flex;align-items:center;justify-content:center;text-align:center;font-size:9.5px;letter-spacing:0.35px;font-weight:bold;color:#1446c8;line-height:10px">Description</div>
<div style="position:absolute;left:819px;top:463px;width:68px;height:35px;display:flex;align-items:center;justify-content:center;text-align:center;font-size:9.5px;letter-spacing:0.35px;font-weight:bold;color:#1446c8;line-height:10px">Quantity</div>
<div style="position:absolute;left:887px;top:463px;width:58px;height:35px;display:flex;align-items:center;justify-content:center;text-align:center;font-size:9.5px;letter-spacing:0.35px;font-weight:bold;color:#1446c8;line-height:10px">WM</div>
<div style="position:absolute;left:945px;top:463px;width:59px;height:35px;display:flex;align-items:center;justify-content:center;text-align:center;font-size:9.5px;letter-spacing:0.35px;font-weight:bold;color:#1446c8;line-height:10px">Rate</div>
<div style="position:absolute;left:1004px;top:463px;width:68px;height:35px;display:flex;align-items:center;justify-content:center;text-align:center;font-size:9.5px;letter-spacing:0.35px;font-weight:bold;color:#1446c8;line-height:10px">Amount</div>
<div style="position:absolute;left:3px;top:499px;width:1070px;height:29px;background:#d3e2f7;"></div>
<div style="position:absolute;left:3px;top:527px;width:1070px;height:1px;background:#c9c9c9;"></div>
<div style="position:absolute;left:28px;top:503px;width:62px;height:20px;box-sizing:border-box;border:1px solid #c4c4c4;border-radius:3px;background:#e9e9e9;"><div style="position:absolute;left:4px;top:0;line-height:18px;font-size:9.5px;color:#2a2a2a;white-space:nowrap;overflow:hidden;letter-spacing:0.5px;width:51px">LAB</div></div>
<div style="position:absolute;left:104px;top:503px;width:73px;height:20px;box-sizing:border-box;border:1px solid #c4c4c4;border-radius:3px;background:#e9e9e9;"><div style="position:absolute;left:4px;top:0;line-height:18px;font-size:9.5px;color:#2a2a2a;white-space:nowrap;overflow:hidden;letter-spacing:0.5px;width:62px">10</div></div>
<div style="position:absolute;left:191px;top:503px;width:59px;height:20px;box-sizing:border-box;border:1px solid #c4c4c4;border-radius:3px;background:#e9e9e9;"><div style="position:absolute;left:4px;top:0;line-height:18px;font-size:9.5px;color:#2a2a2a;white-space:nowrap;overflow:hidden;letter-spacing:0.5px;width:48px">AMO</div></div>
<div style="position:absolute;left:264px;top:503px;width:123px;height:20px;box-sizing:border-box;border:1px solid #c4c4c4;border-radius:3px;background:#e9e9e9;"><div style="position:absolute;left:4px;top:0;line-height:18px;font-size:9.5px;color:#2a2a2a;white-space:nowrap;overflow:hidden;letter-spacing:0.5px;width:112px">Sunny Mohan</div></div>
<div style="position:absolute;left:404px;top:503px;width:50px;height:20px;box-sizing:border-box;border:1px solid #c4c4c4;border-radius:3px;background:#e9e9e9;"><div style="position:absolute;left:4px;top:0;line-height:18px;font-size:9.5px;color:#2a2a2a;white-space:nowrap;overflow:hidden;letter-spacing:0.5px;width:39px">ZZ10</div></div>
<div style="position:absolute;left:467px;top:503px;width:122px;height:20px;box-sizing:border-box;border:1px solid #c4c4c4;border-radius:3px;background:#e9e9e9;"><div style="position:absolute;left:4px;top:0;line-height:18px;font-size:9.5px;color:#2a2a2a;white-space:nowrap;overflow:hidden;letter-spacing:0.5px;width:111px">Non Skilled</div></div>
<div style="position:absolute;left:607px;top:503px;width:196px;height:20px;box-sizing:border-box;border:1px solid #c4c4c4;border-radius:3px;background:#e9e9e9;"><div style="position:absolute;left:4px;top:0;line-height:18px;font-size:9.5px;color:#2a2a2a;white-space:nowrap;overflow:hidden;letter-spacing:0.5px;width:185px">Labour</div></div>
<div style="position:absolute;left:824px;top:503px;width:55px;height:20px;box-sizing:border-box;border:1px solid #c4c4c4;border-radius:3px;background:#e9e9e9;"><div style="position:absolute;right:4px;top:0;line-height:18px;font-size:9.5px;color:#2a2a2a;white-space:nowrap;letter-spacing:0.5px">5.00</div></div>
<div style="position:absolute;left:892px;top:503px;width:46px;height:20px;box-sizing:border-box;border:1px solid #c4c4c4;border-radius:3px;background:#e9e9e9;"><div style="position:absolute;left:4px;top:0;line-height:18px;font-size:9.5px;color:#2a2a2a;white-space:nowrap;overflow:hidden;letter-spacing:0.5px;width:35px">HR</div></div>
<div style="position:absolute;left:950px;top:503px;width:47px;height:20px;box-sizing:border-box;border:1px solid #c4c4c4;border-radius:3px;background:#e9e9e9;"><div style="position:absolute;right:4px;top:0;line-height:18px;font-size:9.5px;color:#2a2a2a;white-space:nowrap;letter-spacing:0.5px">25.00</div></div>
<div style="position:absolute;left:1009px;top:503px;width:55px;height:20px;box-sizing:border-box;border:1px solid #c4c4c4;border-radius:3px;background:#e9e9e9;"><div style="position:absolute;right:4px;top:0;line-height:18px;font-size:9.5px;color:#2a2a2a;white-space:nowrap;letter-spacing:0.5px">125.00</div></div>
<div style="position:absolute;left:3px;top:528px;width:1070px;height:28px;background:#ededed;"></div>
<div style="position:absolute;left:3px;top:528px;width:20px;height:28px;background:#fff;"></div>
<div style="position:absolute;left:3px;top:555px;width:1070px;height:1px;background:#c9c9c9;"></div>
<div style="position:absolute;left:33px;top:528px;width:43px;overflow:hidden;line-height:26px;font-size:9.5px;color:#2a2a2a;white-space:nowrap;letter-spacing:0.5px">LAB</div>
<div style="position:absolute;left:612px;top:528px;width:184px;overflow:hidden;line-height:26px;font-size:9.5px;color:#2a2a2a;white-space:nowrap;letter-spacing:0.5px">AP-Voucher 4863, Vendor 10-003</div>
<div style="position:absolute;left:897px;top:528px;width:25px;overflow:hidden;line-height:26px;font-size:9.5px;color:#2a2a2a;white-space:nowrap;letter-spacing:0.5px">HR</div>
<div style="position:absolute;left:1004px;top:528px;width:55px;line-height:26px;text-align:right;font-size:9.5px;color:#2a2a2a;white-space:nowrap;letter-spacing:0.5px">105.00</div>
<div style="position:absolute;left:3px;top:556px;width:1070px;height:28px;background:#ffffff;"></div>
<div style="position:absolute;left:3px;top:556px;width:20px;height:28px;background:#fff;"></div>
<div style="position:absolute;left:3px;top:583px;width:1070px;height:1px;background:#c9c9c9;"></div>
<div style="position:absolute;left:33px;top:556px;width:43px;overflow:hidden;line-height:26px;font-size:9.5px;color:#2a2a2a;white-space:nowrap;letter-spacing:0.5px">LAB</div>
<div style="position:absolute;left:109px;top:556px;width:54px;overflow:hidden;line-height:26px;font-size:9.5px;color:#2a2a2a;white-space:nowrap;letter-spacing:0.5px">10</div>
<div style="position:absolute;left:196px;top:556px;width:40px;overflow:hidden;line-height:26px;font-size:9.5px;color:#2a2a2a;white-space:nowrap;letter-spacing:0.5px">ADWAIT</div>
<div style="position:absolute;left:269px;top:556px;width:107px;overflow:hidden;line-height:26px;font-size:9.5px;color:#2a2a2a;white-space:nowrap;letter-spacing:0.5px">Adwait Mohan</div>
<div style="position:absolute;left:409px;top:556px;width:30px;overflow:hidden;line-height:26px;font-size:9.5px;color:#2a2a2a;white-space:nowrap;letter-spacing:0.5px">ZZ10</div>
<div style="position:absolute;left:472px;top:556px;width:107px;overflow:hidden;line-height:26px;font-size:9.5px;color:#2a2a2a;white-space:nowrap;letter-spacing:0.5px">Non Skilled</div>
<div style="position:absolute;left:612px;top:556px;width:184px;overflow:hidden;line-height:26px;font-size:9.5px;color:#2a2a2a;white-space:nowrap;letter-spacing:0.5px">Labour</div>
<div style="position:absolute;left:819px;top:556px;width:55px;line-height:26px;text-align:right;font-size:9.5px;color:#2a2a2a;white-space:nowrap;letter-spacing:0.5px">2.00</div>
<div style="position:absolute;left:897px;top:556px;width:25px;overflow:hidden;line-height:26px;font-size:9.5px;color:#2a2a2a;white-space:nowrap;letter-spacing:0.5px">HR</div>
<div style="position:absolute;left:945px;top:556px;width:46px;line-height:26px;text-align:right;font-size:9.5px;color:#2a2a2a;white-space:nowrap;letter-spacing:0.5px">25.00</div>
<div style="position:absolute;left:1004px;top:556px;width:55px;line-height:26px;text-align:right;font-size:9.5px;color:#2a2a2a;white-space:nowrap;letter-spacing:0.5px">50.00</div>
<div style="position:absolute;left:3px;top:584px;width:1070px;height:28px;background:#ededed;"></div>
<div style="position:absolute;left:3px;top:584px;width:20px;height:28px;background:#fff;"></div>
<div style="position:absolute;left:3px;top:611px;width:1070px;height:1px;background:#c9c9c9;"></div>
<div style="position:absolute;left:33px;top:584px;width:43px;overflow:hidden;line-height:26px;font-size:9.5px;color:#2a2a2a;white-space:nowrap;letter-spacing:0.5px">LAB</div>
<div style="position:absolute;left:109px;top:584px;width:54px;overflow:hidden;line-height:26px;font-size:9.5px;color:#2a2a2a;white-space:nowrap;letter-spacing:0.5px">10</div>
<div style="position:absolute;left:196px;top:584px;width:40px;overflow:hidden;line-height:26px;font-size:9.5px;color:#2a2a2a;white-space:nowrap;letter-spacing:0.5px">ADWAIT</div>
<div style="position:absolute;left:269px;top:584px;width:107px;overflow:hidden;line-height:26px;font-size:9.5px;color:#2a2a2a;white-space:nowrap;letter-spacing:0.5px">Adwait Mohan</div>
<div style="position:absolute;left:409px;top:584px;width:30px;overflow:hidden;line-height:26px;font-size:9.5px;color:#2a2a2a;white-space:nowrap;letter-spacing:0.5px">ZZ10</div>
<div style="position:absolute;left:472px;top:584px;width:107px;overflow:hidden;line-height:26px;font-size:9.5px;color:#2a2a2a;white-space:nowrap;letter-spacing:0.5px">Non Skilled</div>
<div style="position:absolute;left:612px;top:584px;width:184px;overflow:hidden;line-height:26px;font-size:9.5px;color:#2a2a2a;white-space:nowrap;letter-spacing:0.5px">labour</div>
<div style="position:absolute;left:819px;top:584px;width:55px;line-height:26px;text-align:right;font-size:9.5px;color:#2a2a2a;white-space:nowrap;letter-spacing:0.5px">2.00</div>
<div style="position:absolute;left:897px;top:584px;width:25px;overflow:hidden;line-height:26px;font-size:9.5px;color:#2a2a2a;white-space:nowrap;letter-spacing:0.5px">HR</div>
<div style="position:absolute;left:945px;top:584px;width:46px;line-height:26px;text-align:right;font-size:9.5px;color:#2a2a2a;white-space:nowrap;letter-spacing:0.5px">25.00</div>
<div style="position:absolute;left:1004px;top:584px;width:55px;line-height:26px;text-align:right;font-size:9.5px;color:#2a2a2a;white-space:nowrap;letter-spacing:0.5px">50.00</div>
<div style="position:absolute;left:3px;top:612px;width:1070px;height:28px;background:#ffffff;"></div>
<div style="position:absolute;left:3px;top:612px;width:20px;height:28px;background:#fff;"></div>
<div style="position:absolute;left:3px;top:639px;width:1070px;height:1px;background:#c9c9c9;"></div>
<div style="position:absolute;left:33px;top:612px;width:43px;overflow:hidden;line-height:26px;font-size:9.5px;color:#2a2a2a;white-space:nowrap;letter-spacing:0.5px">LAB</div>
<div style="position:absolute;left:409px;top:612px;width:30px;overflow:hidden;line-height:26px;font-size:9.5px;color:#2a2a2a;white-space:nowrap;letter-spacing:0.5px">JNY</div>
<div style="position:absolute;left:472px;top:612px;width:107px;overflow:hidden;line-height:26px;font-size:9.5px;color:#2a2a2a;white-space:nowrap;letter-spacing:0.5px">xJourneyman</div>
<div style="position:absolute;left:612px;top:612px;width:184px;overflow:hidden;line-height:26px;font-size:9.5px;color:#2a2a2a;white-space:nowrap;letter-spacing:0.5px">PY-Timesheet WK 2017 13, Employee 0001</div>
<div style="position:absolute;left:819px;top:612px;width:55px;line-height:26px;text-align:right;font-size:9.5px;color:#2a2a2a;white-space:nowrap;letter-spacing:0.5px">8.00</div>
<div style="position:absolute;left:897px;top:612px;width:25px;overflow:hidden;line-height:26px;font-size:9.5px;color:#2a2a2a;white-space:nowrap;letter-spacing:0.5px">HR</div>
<div style="position:absolute;left:945px;top:612px;width:46px;line-height:26px;text-align:right;font-size:9.5px;color:#2a2a2a;white-space:nowrap;letter-spacing:0.5px">56.82</div>
<div style="position:absolute;left:1004px;top:612px;width:55px;line-height:26px;text-align:right;font-size:9.5px;color:#2a2a2a;white-space:nowrap;letter-spacing:0.5px">454.56</div>
<div style="position:absolute;left:3px;top:640px;width:1070px;height:29px;background:#ededed;"></div>
<div style="position:absolute;left:3px;top:640px;width:20px;height:29px;background:#fff;"></div>
<div style="position:absolute;left:3px;top:668px;width:1070px;height:1px;background:#c9c9c9;"></div>
<div style="position:absolute;left:33px;top:640px;width:43px;overflow:hidden;line-height:27px;font-size:9.5px;color:#2a2a2a;white-space:nowrap;letter-spacing:0.5px">LAB</div>
<div style="position:absolute;left:109px;top:640px;width:54px;overflow:hidden;line-height:27px;font-size:9.5px;color:#2a2a2a;white-space:nowrap;letter-spacing:0.5px">10</div>
<div style="position:absolute;left:196px;top:640px;width:40px;overflow:hidden;line-height:27px;font-size:9.5px;color:#2a2a2a;white-space:nowrap;letter-spacing:0.5px">AMO</div>
<div style="position:absolute;left:269px;top:640px;width:107px;overflow:hidden;line-height:27px;font-size:9.5px;color:#2a2a2a;white-space:nowrap;letter-spacing:0.5px">Sunny Mohan</div>
<div style="position:absolute;left:409px;top:640px;width:30px;overflow:hidden;line-height:27px;font-size:9.5px;color:#2a2a2a;white-space:nowrap;letter-spacing:0.5px">ZZ10</div>
<div style="position:absolute;left:472px;top:640px;width:107px;overflow:hidden;line-height:27px;font-size:9.5px;color:#2a2a2a;white-space:nowrap;letter-spacing:0.5px">Non Skilled</div>
<div style="position:absolute;left:819px;top:640px;width:55px;line-height:27px;text-align:right;font-size:9.5px;color:#2a2a2a;white-space:nowrap;letter-spacing:0.5px">5.00</div>
<div style="position:absolute;left:897px;top:640px;width:25px;overflow:hidden;line-height:27px;font-size:9.5px;color:#2a2a2a;white-space:nowrap;letter-spacing:0.5px">HR</div>
<div style="position:absolute;left:945px;top:640px;width:46px;line-height:27px;text-align:right;font-size:9.5px;color:#2a2a2a;white-space:nowrap;letter-spacing:0.5px">25.00</div>
<div style="position:absolute;left:1004px;top:640px;width:55px;line-height:27px;text-align:right;font-size:9.5px;color:#2a2a2a;white-space:nowrap;letter-spacing:0.5px">125.00</div>
<div style="position:absolute;left:23px;top:463px;width:1px;height:206px;background:#c9c9c9;"></div>
<div style="position:absolute;left:99px;top:463px;width:1px;height:206px;background:#c9c9c9;"></div>
<div style="position:absolute;left:186px;top:463px;width:1px;height:206px;background:#c9c9c9;"></div>
<div style="position:absolute;left:259px;top:463px;width:1px;height:206px;background:#c9c9c9;"></div>
<div style="position:absolute;left:399px;top:463px;width:1px;height:206px;background:#c9c9c9;"></div>
<div style="position:absolute;left:462px;top:463px;width:1px;height:206px;background:#c9c9c9;"></div>
<div style="position:absolute;left:602px;top:463px;width:1px;height:206px;background:#c9c9c9;"></div>
<div style="position:absolute;left:819px;top:463px;width:1px;height:206px;background:#c9c9c9;"></div>
<div style="position:absolute;left:887px;top:463px;width:1px;height:206px;background:#c9c9c9;"></div>
<div style="position:absolute;left:945px;top:463px;width:1px;height:206px;background:#c9c9c9;"></div>
<div style="position:absolute;left:1004px;top:463px;width:1px;height:206px;background:#c9c9c9;"></div>
<div style="position:absolute;left:1072px;top:463px;width:1px;height:206px;background:#c9c9c9;"></div>
<div style="position:absolute;left:-178px;top:679px;width:300px;line-height:19px;text-align:right;font-size:9.5px;font-weight:bold;color:#4a4a4a;white-space:nowrap;letter-spacing:0.3px;">Expense Description</div>
<div style="position:absolute;left:127px;top:679px;width:109px;height:20px;box-sizing:border-box;border:1px solid #c4c4c4;border-radius:3px;background:#e9e9e9;"><div style="position:absolute;left:3px;top:0;line-height:18px;font-size:9.5px;color:#2a2a2a;white-space:nowrap;overflow:hidden;letter-spacing:0.45px;width:99px">WO Labor</div></div>
<div style="position:absolute;left:-178px;top:703px;width:300px;line-height:19px;text-align:right;font-size:9.5px;font-weight:bold;color:#4a4a4a;white-space:nowrap;letter-spacing:0.3px;">Partner Name</div>
<div style="position:absolute;left:127px;top:704px;width:189px;height:18px;box-sizing:border-box;border:1px solid #c4c4c4;border-radius:3px;background:#e9e9e9;"><div style="position:absolute;left:3px;top:0;line-height:16px;font-size:9.5px;color:#2a2a2a;white-space:nowrap;overflow:hidden;letter-spacing:0.45px;width:179px">CMiC Construction Inc.</div></div>
<div style="position:absolute;left:127px;top:726px;width:95px;height:19px;box-sizing:border-box;border:1px solid #c4c4c4;border-radius:3px;background:linear-gradient(#f5f6f8,#e3e5e8);line-height:16px;text-align:center;font-size:9.5px;letter-spacing:0.35px;font-weight:bold;color:#2a2a2a;white-space:nowrap">Resource Search</div>
<div style="position:absolute;left:230px;top:726px;width:89px;height:19px;box-sizing:border-box;border:1px solid #c4c4c4;border-radius:3px;background:linear-gradient(#f5f6f8,#e3e5e8);line-height:16px;text-align:center;font-size:9.5px;letter-spacing:0.35px;font-weight:bold;color:#2a2a2a;white-space:nowrap">Retrieve Budget</div>
<div style="position:absolute;left:0px;top:0px;width:1331px;height:1px;background:#a8a8a8;"></div>
<div style="position:absolute;left:0px;top:0px;width:1px;height:757px;background:#a8a8a8;"></div>
<div style="position:absolute;left:1px;top:417px;width:1px;height:340px;background:#b8b8b8;"></div>
<div style="position:absolute;left:1329px;top:0px;width:2px;height:757px;background:#a0a0a0;"></div>
<div style="position:absolute;left:0px;top:755px;width:1331px;height:2px;background:#a0a0a0;"></div>
</body></html>
